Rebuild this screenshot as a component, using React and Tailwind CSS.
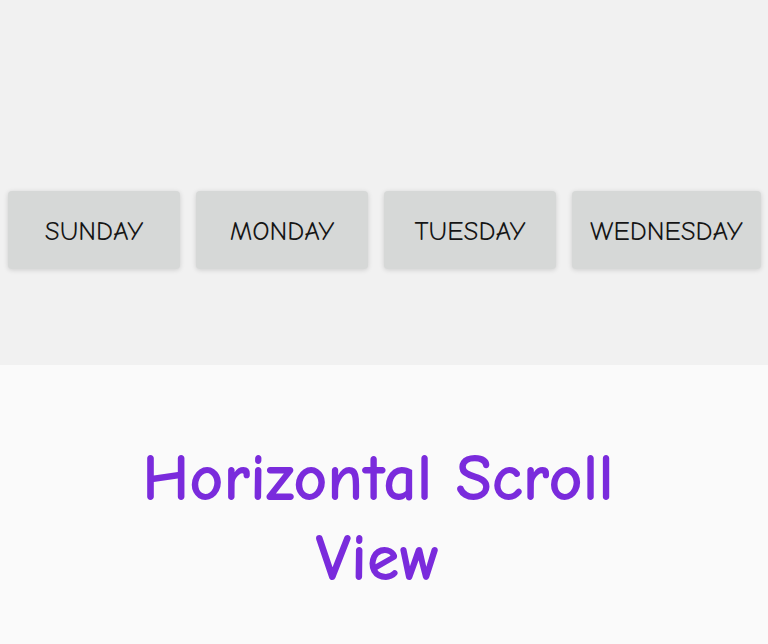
import React from "react";

const DAYS = ["Sunday", "Monday", "Tuesday", "Wednesday"];

const App = () => {
  return (
    <main className="flex flex-col min-h-screen bg-[#fafafa] font-['Comic_Neue','Open_Sans',cursive]">
      {/* Scrollable row of days */}
      <div className="flex items-center gap-4 overflow-x-auto bg-[#f1f1f1] px-2 pt-[191px] pb-24 [scrollbar-width:none]">
        {DAYS.map((day) => (
          <button
            key={day}
            type="button"
            className="shrink-0 min-w-43 h-[78px] px-[18px] pt-1 rounded bg-[#d6d8d7] text-[27px] text-[#151515] uppercase shadow-[0_1px_5px_rgba(0,0,0,0.15)]"
          >
            {day}
          </button>
        ))}
      </div>

      <h1 className="mx-auto max-w-[540px] pt-[74px] pr-3 text-center text-[66px] font-bold leading-[80px] text-[#7a2bdc]">
        Horizontal Scroll View
      </h1>
    </main>
  );
};

export default App;
